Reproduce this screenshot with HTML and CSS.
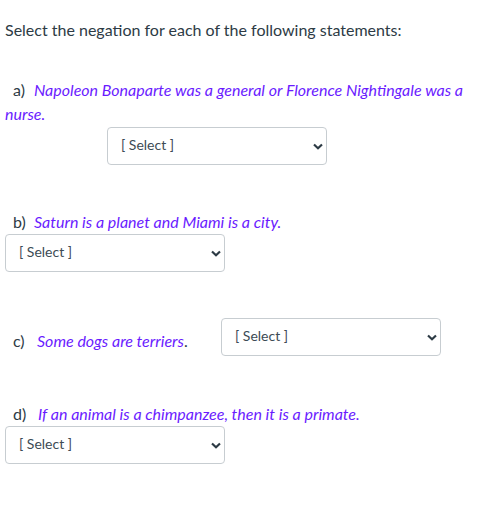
FILE: index.html
```html
<!DOCTYPE html>
<html>
<head>
<meta charset="utf-8">
<link rel="stylesheet" href="styles.css">
</head>
<body>
<div class="page">
  <p class="title">Select the negation for each of the following statements:</p>

  <p class="q q-a"><span class="lbl">a)</span><em>Napoleon Bonaparte was a general or Florence Nightingale was a nurse.</em></p>
  <div class="sel sel-a">
    <select><option>[ Select ]</option></select>
    <svg class="chev" width="10" height="7" viewBox="0 0 10 7"><path d="M1 1.5 L5 5.2 L9 1.5" fill="none" stroke="#2d3b45" stroke-width="2.2"/></svg>
  </div>

  <p class="q q-b"><span class="lbl">b)</span><em>Saturn is a planet and Miami is a city.</em></p>
  <div class="sel">
    <select><option>[ Select ]</option></select>
    <svg class="chev" width="10" height="7" viewBox="0 0 10 7"><path d="M1 1.5 L5 5.2 L9 1.5" fill="none" stroke="#2d3b45" stroke-width="2.2"/></svg>
  </div>

  <div class="row-c">
    <p class="q q-c"><span class="lbl lbl-c">c)</span><em>Some dogs are terriers</em>.</p>
    <div class="sel sel-c">
      <select><option>[ Select ]</option></select>
      <svg class="chev" width="10" height="7" viewBox="0 0 10 7"><path d="M1 1.5 L5 5.2 L9 1.5" fill="none" stroke="#2d3b45" stroke-width="2.2"/></svg>
    </div>
  </div>

  <p class="q q-d"><span class="lbl lbl-d">d)</span><em>If an animal is a chimpanzee, then it is a primate.</em></p>
  <div class="sel">
    <select><option>[ Select ]</option></select>
    <svg class="chev" width="10" height="7" viewBox="0 0 10 7"><path d="M1 1.5 L5 5.2 L9 1.5" fill="none" stroke="#2d3b45" stroke-width="2.2"/></svg>
  </div>
</div>
</body>
</html>
```
FILE: styles.css
```css
html, body {
  margin: 0;
  padding: 0;
  background: #ffffff;
}
body {
  font-family: Lato, "Open Sans", sans-serif;
  color: #2d3b45;
  font-size: 16px;
  line-height: 24px;
}
.page {
  padding: 18px 5px 0 5px;
}
p {
  margin: 0;
}
.title {
  color: #2d3b45;
}
.q {
  text-indent: 8px;
}
.q em {
  color: #6a1bff;
}
.lbl {
  display: inline-block;
  text-indent: 0;
  width: 21px;
}
.lbl-c {
  width: 24px;
}
.lbl-d {
  width: 25px;
}
.q-a {
  margin-top: 36px;
}
.q-b {
  margin-top: 45px;
}
.q-d {
  margin-top: 46px;
}
.sel {
  position: relative;
  width: 220px;
  height: 38px;
}
.sel-a {
  margin-left: 102px;
  margin-top: 1px;
}
.sel select {
  appearance: none;
  -webkit-appearance: none;
  box-sizing: border-box;
  width: 220px;
  height: 38px;
  margin: 0;
  border: 1px solid #c7cdd1;
  border-radius: 4px;
  background: #ffffff;
  font-family: Lato, "Open Sans", sans-serif;
  font-size: 14px;
  color: #3d4b55;
  padding: 0 0 3px 13px;
  outline: none;
}
.chev {
  position: absolute;
  right: 4px;
  top: 16px;
}
.row-c {
  display: flex;
  align-items: flex-start;
  margin-top: 46px;
}
.q-c {
  margin-top: 11px;
  width: 216px;
}
```
